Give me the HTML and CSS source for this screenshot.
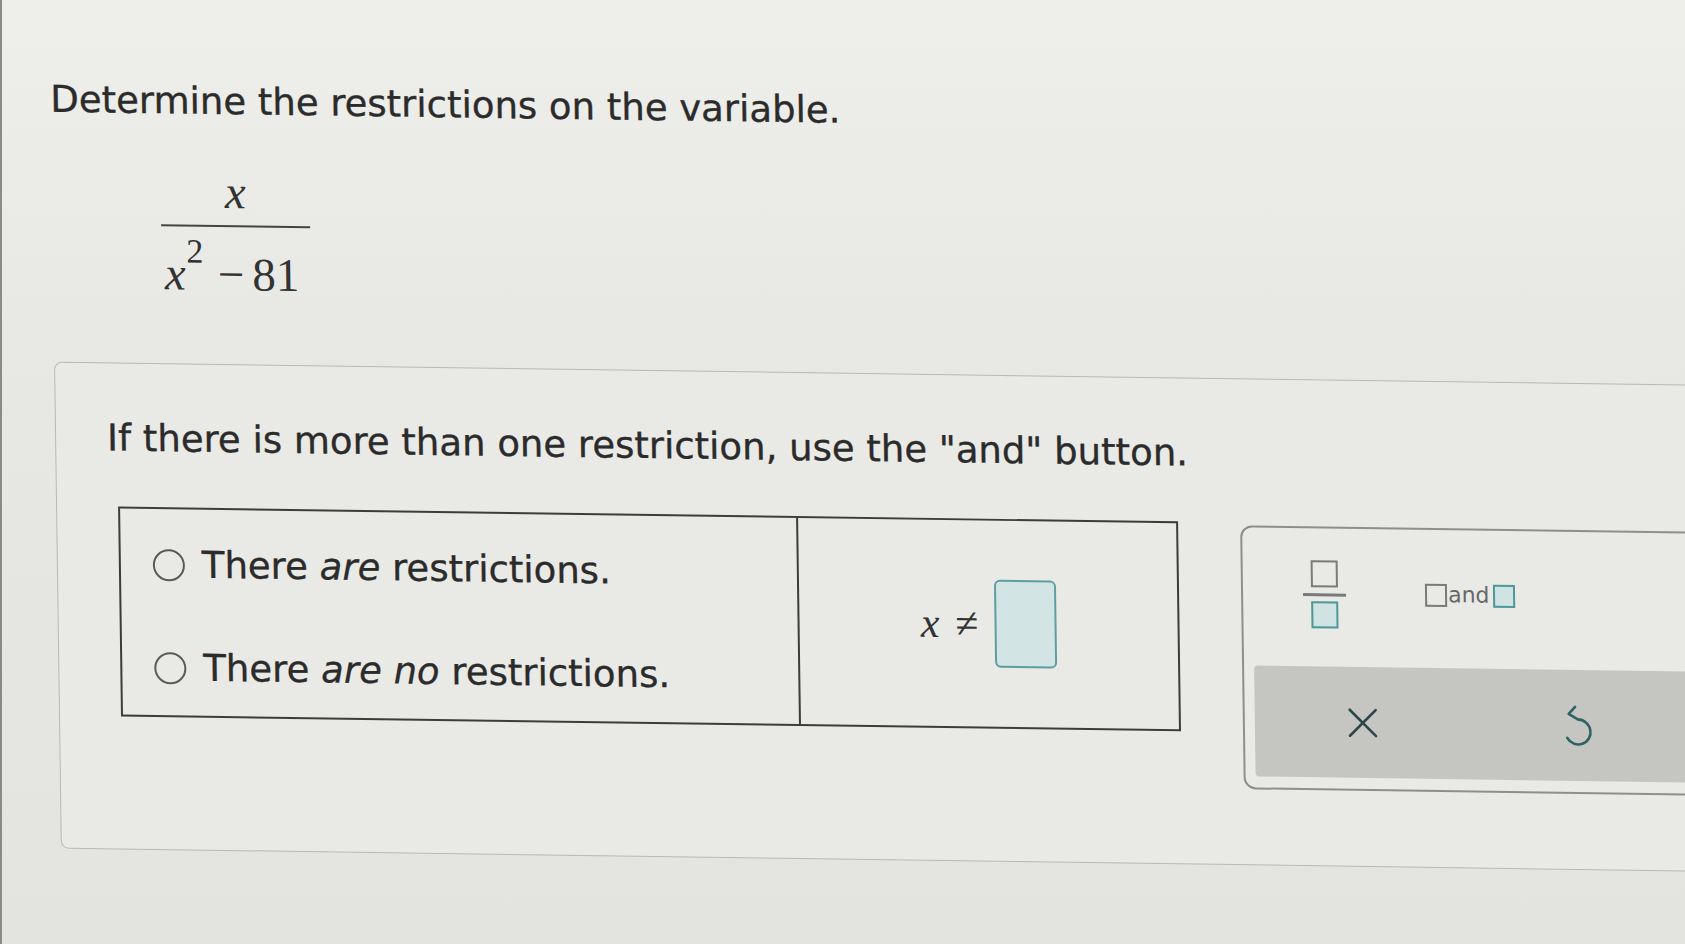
FILE: index.html
```html
<!DOCTYPE html>
<html lang="en">
<head>
<meta charset="utf-8">
<title>Restrictions on the variable</title>
<link rel="stylesheet" href="styles.css">
</head>
<body>
<div class="screen">
  <h1 class="prompt">Determine the restrictions on the variable.</h1>
  <div class="frac">
    <div class="num"><i>x</i></div>
    <div class="den"><i>x</i><sup>2</sup><span class="op">−</span>81</div>
  </div>
  <section class="card">
    <p class="instr">If there is more than one restriction, use the "and" button.</p>
    <div class="work">
      <div class="answer">
        <div class="choices">
          <label class="choice"><span class="radio"></span><span>There <i>are</i> restrictions.</span></label>
          <label class="choice"><span class="radio"></span><span>There <i>are</i> <i>no</i> restrictions.</span></label>
        </div>
        <div class="entry"><i class="mx">x</i><span class="ne">≠</span><span class="box"></span></div>
      </div>
      <div class="palette">
        <div class="tools">
          <div class="frac-tool">
            <span class="sq big"></span>
            <span class="bar"></span>
            <span class="sq big teal"></span>
          </div>
          <div class="and-tool"><span class="sq"></span><span class="and">and</span><span class="sq teal"></span></div>
        </div>
        <div class="actions">
          <button class="act" type="button" aria-label="Clear">
            <svg width="32" height="32" viewBox="0 0 32 32"><path d="M3 3 L29 29 M29 3 L3 29" stroke="#2d4646" stroke-width="2.6" fill="none" stroke-linecap="round"/></svg>
          </button>
          <button class="act" type="button" aria-label="Undo">
            <svg width="34" height="42" viewBox="0 0 34 42"><path d="M14.5 2 L8 9 L17 14.5 A12.5 12.5 0 1 1 6.2 33.2" stroke="#2f6262" stroke-width="2.6" fill="none" stroke-linecap="round" stroke-linejoin="round"/></svg>
          </button>
        </div>
      </div>
    </div>
  </section>
</div>
</body>
</html>
```

FILE: styles.css
```css
html, body {
  margin: 0;
  height: 100%;
  overflow: hidden;
}

body {
  box-sizing: border-box;
  background: linear-gradient(180deg, #eeeeeb 0%, #e7e7e4 40%, #e3e3e0 100%);
  border-left: 2px solid #8a8a8a;
  font-family: "DejaVu Sans", Verdana, sans-serif;
  color: #2b2b2b;
  -webkit-text-stroke: 0.35px #2b2b2b;
}

.screen {
  box-sizing: border-box;
  width: 1800px;
  padding: 77px 0 0 47px;
  transform: matrix(1, 0.014, 0.014, 1, 0, 0);
  transform-origin: 0 0;
}

.prompt {
  margin: 0;
  font-size: 37px;
  line-height: 44px;
  font-weight: normal;
}

.frac {
  display: flex;
  flex-direction: column;
  width: 149px;
  margin: 43px 0 0 109px;
  font-family: "Liberation Serif", "Times New Roman", serif;
  font-size: 47px;
  line-height: 50px;
  -webkit-text-stroke: 0;
  color: #333;
}

.num {
  padding-bottom: 8px;
  border-bottom: 2px solid #444;
  text-align: center;
}

.den {
  margin-top: 22px;
  padding-left: 3px;
}

.den sup {
  font-size: 34px;
  line-height: 0;
  vertical-align: 27px;
  margin: 0 4px 0 1px;
}

.op {
  margin: 0 8px 0 10px;
}

.card {
  box-sizing: border-box;
  height: 487px;
  margin-top: 65px;
  padding: 53px 0 0 51px;
  border: 1.5px solid #b8b8b6;
  border-radius: 8px;
  background: #e9e9e6;
}

.instr {
  margin: 0;
  font-size: 37px;
  line-height: 44px;
}

.work {
  display: flex;
  align-items: flex-start;
  margin-top: 46px;
}

.answer {
  box-sizing: border-box;
  display: flex;
  flex: none;
  width: 1060px;
  height: 210px;
  margin-left: 10px;
  border: 2px solid #3c3c3c;
}

.choices {
  box-sizing: border-box;
  flex: none;
  width: 678px;
  padding: 34px 0 0 32px;
  border-right: 2px solid #3c3c3c;
}

.choice {
  display: flex;
  align-items: center;
  height: 44px;
  font-size: 37px;
  line-height: 44px;
}

.choice + .choice {
  margin-top: 59px;
}

.radio {
  flex: none;
  width: 28px;
  height: 28px;
  margin-right: 17px;
  border: 2px solid #5a5a5a;
  border-radius: 50%;
}

.entry {
  flex: 1;
  display: flex;
  align-items: center;
  justify-content: center;
  font-family: "Liberation Serif", "Times New Roman", serif;
  font-size: 42px;
  color: #333;
  -webkit-text-stroke: 0;
}

.ne {
  margin-left: 16px;
}

.box {
  box-sizing: border-box;
  width: 62px;
  height: 88px;
  margin-left: 16px;
  border: 2px solid #5f9ea0;
  border-radius: 6px;
  background: #d2e4e4;
}

.palette {
  box-sizing: border-box;
  flex: none;
  width: 520px;
  height: 264px;
  margin: 3px 0 0 62px;
  border: 2px solid #8e8e8c;
  border-radius: 12px;
  background: #e9e9e6;
}

.tools {
  box-sizing: border-box;
  display: flex;
  align-items: flex-start;
  height: 138px;
  padding: 32px 0 0 60px;
}

.frac-tool {
  display: flex;
  flex-direction: column;
  align-items: center;
  width: 43px;
}

.sq {
  box-sizing: border-box;
  display: block;
  width: 22px;
  height: 23px;
  border: 2px solid #7a7a7a;
}

.sq.big {
  width: 27px;
  height: 27px;
  border-width: 2.5px;
}

.sq.teal {
  border-color: #4f9898;
  background: #cfe3e3;
}

.bar {
  display: block;
  width: 43px;
  height: 3px;
  margin: 6px 0 5px;
  background: #7a7a7a;
}

.and-tool {
  display: flex;
  align-items: center;
  margin: 21px 0 0 79px;
  font-size: 22px;
  color: #666;
  -webkit-text-stroke: 0;
}

.and {
  margin: 0 4px 0 1px;
  line-height: 24px;
}

.actions {
  display: flex;
  height: 111px;
  margin-left: 10px;
  border-radius: 4px;
  background: #c5c5c2;
}

.act {
  display: flex;
  align-items: center;
  justify-content: center;
  width: 215px;
  height: 111px;
  padding: 0;
  border: 0;
  background: transparent;
}
```
